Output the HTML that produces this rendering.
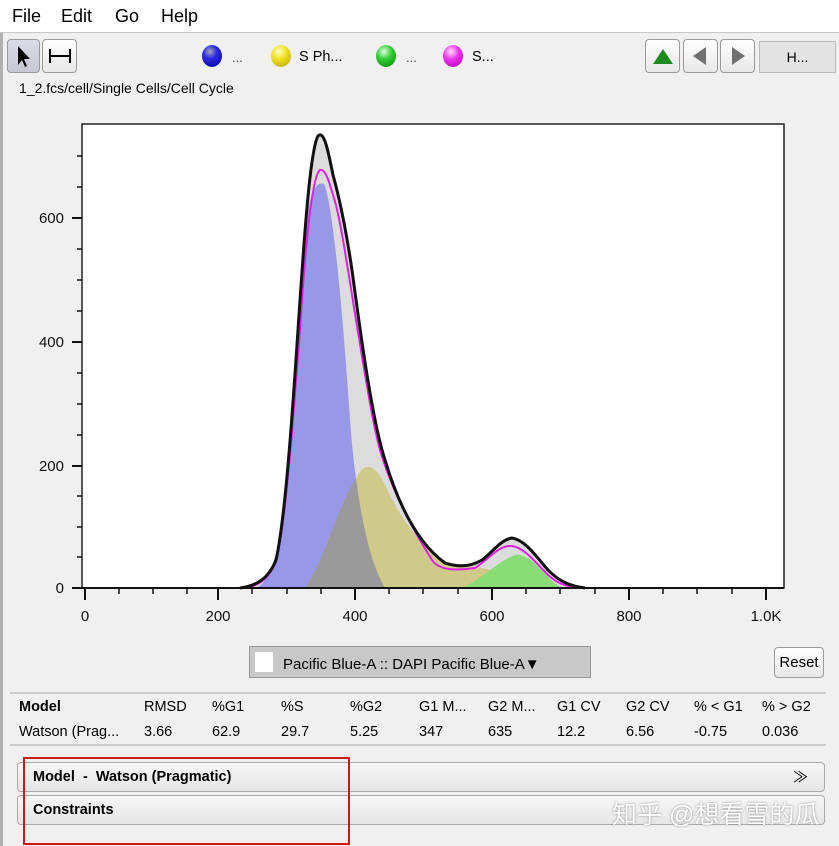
<!DOCTYPE html>
<html><head><meta charset="utf-8"><style>
*{margin:0;padding:0;box-sizing:border-box}
body{width:839px;height:846px;background:#f0f0f0;font-family:"Liberation Sans","Noto Sans CJK SC",sans-serif;position:relative;overflow:hidden;color:#000}
.abs{position:absolute}
.menu{left:0;top:0;width:839px;height:33px;background:#fff;border-bottom:1px solid #c8c8c8;font-size:18px}
.menu span{position:absolute;top:6px}
.btn{position:absolute;border:1px solid #9a9a9a;border-radius:4px;background:linear-gradient(#fff,#e8e8e8)}
.ball{position:absolute;width:20px;height:22px;border-radius:50%}
.t{font-size:14.5px;position:absolute}
.th{font-weight:bold}
</style></head><body>
<div class="abs" style="left:0;top:0;width:3px;height:846px;background:#b0b0b0"></div>
<div class="abs menu"><span style="left:12px">File</span><span style="left:61px">Edit</span><span style="left:115px">Go</span><span style="left:161px">Help</span></div>
<div class="btn" style="left:7px;top:39px;width:33px;height:34px;background:linear-gradient(#dcdce8,#c8c8d4)"></div>
<svg class="abs" style="left:14px;top:45px" width="20" height="24"><path d="M4 1 L4 20 L8 15 L11 22 L13 21 L10 14 L16 14 Z" fill="#000"/></svg>
<div class="btn" style="left:42px;top:39px;width:35px;height:34px"></div>
<svg class="abs" style="left:48px;top:47px" width="24" height="18"><path d="M2 2V16M22 2V16M2 9H22" stroke="#000" stroke-width="2" fill="none"/></svg>
<div class="ball" style="left:202px;top:45px;background:radial-gradient(circle at 40% 30%,#aab 0,#2a2ae0 35%,#0000a0 100%)"></div>
<span class="t" style="left:232px;top:50px;font-size:13px;color:#444">...</span>
<div class="ball" style="left:271px;top:45px;background:radial-gradient(circle at 40% 30%,#ffffc0 0,#f0e020 40%,#b0a000 100%)"></div>
<span class="t" style="left:299px;top:49px">S Ph...</span>
<div class="ball" style="left:376px;top:45px;background:radial-gradient(circle at 40% 30%,#dfd 0,#3c3 40%,#080 100%)"></div>
<span class="t" style="left:406px;top:50px;font-size:13px;color:#444">...</span>
<div class="ball" style="left:443px;top:45px;background:radial-gradient(circle at 40% 30%,#fdf 0,#e3e 40%,#a0a 100%)"></div>
<span class="t" style="left:472px;top:49px">S...</span>
<div class="btn" style="left:645px;top:39px;width:35px;height:34px"></div>
<svg class="abs" style="left:651px;top:46px" width="24" height="20"><path d="M2 18H22L12 3Z" fill="#1f8a1f"/></svg>
<div class="btn" style="left:683px;top:39px;width:35px;height:34px"></div>
<svg class="abs" style="left:690px;top:45px" width="20" height="22"><path d="M16 2V20L3 11Z" fill="#707070"/></svg>
<div class="btn" style="left:720px;top:39px;width:35px;height:34px"></div>
<svg class="abs" style="left:728px;top:45px" width="20" height="22"><path d="M4 2V20L17 11Z" fill="#707070"/></svg>
<div class="abs" style="left:759px;top:41px;width:77px;height:32px;background:#e4e4e4;border:1px solid #bbb;font-size:14px;text-align:center;line-height:30px">H...</div>
<span class="t" style="left:19px;top:80px;font-size:14px">1_2.fcs/cell/Single Cells/Cell Cycle</span>

<svg class="abs" style="left:0;top:0" width="839" height="640">
<defs><clipPath id="yc"><path d="M305 588 C325 560,340 500,357 477 C362 468,366 466,370 467 C378 470,383 480,390 495 C400 515,415 540,443 560 C460 567,478 566,490 570 C505 578,515 584,535 588 Z"/></clipPath></defs>
<rect x="82" y="124" width="702" height="464" fill="#fff" stroke="#222" stroke-width="1.5"/>
<path d="M240 588 C255 586,268 580,276 560 C285 520,292 420,298 330 C304 240,310 150,318 136 C324 130,328 150,333 175 C340 200,346 230,352 270 C360 330,372 420,385 460 C400 510,420 545,445 563 C460 568,472 566,482 560 C492 553,500 540,512 538 C525 540,535 555,548 570 C560 582,570 586,585 588 Z" fill="#dcdcdc"/>
<path d="M305 588 C325 560,340 500,357 477 C362 468,366 466,370 467 C378 470,383 480,390 495 C400 515,415 540,443 560 C460 567,478 566,490 570 C505 578,515 584,535 588 Z" fill="#cfca8a"/>
<path d="M462 588 C480 580,500 560,515 555 C525 553,535 563,545 574 C552 582,558 586,563 588 Z" fill="#88dd77"/>
<path d="M255 588 C265 586,272 570,280 540 C290 480,298 300,308 210 C313 186,318 182,324 184 C332 200,342 300,350 420 C356 500,368 560,385 588 Z" fill="#9898e6"/>
<path d="M255 588 C265 586,272 570,280 540 C290 480,298 300,308 210 C313 186,318 182,324 184 C332 200,342 300,350 420 C356 500,368 560,385 588 Z" fill="#9a9a9a" clip-path="url(#yc)"/>
<path d="M245 588 C258 586,268 580,276 562 C286 520,293 420,300 330 C305 250,312 175,320 170 C326 168,330 185,336 205 C342 230,348 270,356 320 C366 380,372 420,380 450 C392 490,410 525,432 560 C440 572,460 570,475 568 C488 560,498 545,512 546 C525 548,535 562,548 575 C558 584,568 587,580 588" fill="none" stroke="#e020e0" stroke-width="2"/>
<path d="M240 588 C255 586,268 580,276 560 C285 520,292 420,298 330 C304 240,310 150,318 136 C324 130,328 150,333 175 C340 200,346 230,352 270 C360 330,372 420,385 460 C400 510,420 545,445 563 C460 568,472 566,482 560 C492 553,500 540,512 538 C525 540,535 555,548 570 C560 582,570 586,585 588" fill="none" stroke="#111" stroke-width="3"/>
<line x1="82" y1="588" x2="784" y2="588" stroke="#111" stroke-width="2"/>
<g stroke="#111" stroke-width="2">
<line x1="72" y1="588" x2="82" y2="588"/><line x1="72" y1="466" x2="82" y2="466"/><line x1="72" y1="342" x2="82" y2="342"/><line x1="72" y1="218" x2="82" y2="218"/>
<line x1="85" y1="588" x2="85" y2="600"/><line x1="218" y1="588" x2="218" y2="600"/><line x1="355" y1="588" x2="355" y2="600"/><line x1="492" y1="588" x2="492" y2="600"/><line x1="629" y1="588" x2="629" y2="600"/><line x1="766" y1="588" x2="766" y2="600"/>
</g>
<g stroke="#111" stroke-width="1.5">
<line x1="77" y1="557" x2="82" y2="557"/><line x1="77" y1="527" x2="82" y2="527"/><line x1="77" y1="496" x2="82" y2="496"/><line x1="77" y1="435" x2="82" y2="435"/><line x1="77" y1="404" x2="82" y2="404"/><line x1="77" y1="373" x2="82" y2="373"/><line x1="77" y1="311" x2="82" y2="311"/><line x1="77" y1="280" x2="82" y2="280"/><line x1="77" y1="249" x2="82" y2="249"/><line x1="77" y1="187" x2="82" y2="187"/><line x1="77" y1="156" x2="82" y2="156"/>
<line x1="119" y1="588" x2="119" y2="594"/><line x1="153" y1="588" x2="153" y2="594"/><line x1="187" y1="588" x2="187" y2="594"/><line x1="252" y1="588" x2="252" y2="594"/><line x1="287" y1="588" x2="287" y2="594"/><line x1="321" y1="588" x2="321" y2="594"/><line x1="389" y1="588" x2="389" y2="594"/><line x1="423" y1="588" x2="423" y2="594"/><line x1="458" y1="588" x2="458" y2="594"/><line x1="526" y1="588" x2="526" y2="594"/><line x1="560" y1="588" x2="560" y2="594"/><line x1="595" y1="588" x2="595" y2="594"/><line x1="663" y1="588" x2="663" y2="594"/><line x1="697" y1="588" x2="697" y2="594"/><line x1="732" y1="588" x2="732" y2="594"/>
</g>
<g font-family="Liberation Sans" font-size="15" fill="#111" text-anchor="end">
<text x="64" y="593">0</text><text x="64" y="471">200</text><text x="64" y="347">400</text><text x="64" y="223">600</text>
</g>
<g font-family="Liberation Sans" font-size="15" fill="#111" text-anchor="middle">
<text x="85" y="621">0</text><text x="218" y="621">200</text><text x="355" y="621">400</text><text x="492" y="621">600</text><text x="629" y="621">800</text><text x="766" y="621">1.0K</text>
</g>
</svg>

<div class="abs" style="left:249px;top:646px;width:342px;height:32px;background:#c8c8c8;border:1px solid #999"></div>
<div class="abs" style="left:255px;top:652px;width:18px;height:20px;background:#fff"></div>
<span class="t" style="left:283px;top:656px;font-size:15px">Pacific Blue-A :: DAPI Pacific Blue-A▼</span>
<div class="btn" style="left:774px;top:647px;width:50px;height:31px;font-size:15px;text-align:center;line-height:29px">Reset</div>
<div class="abs" style="left:10px;top:692px;width:816px;height:2px;background:#ccc"></div>
<div class="abs" style="left:10px;top:744px;width:816px;height:2px;background:#ccc"></div>
<span class="t th" style="left:19px;top:699px">Model</span><span class="t" style="left:144px;top:699px">RMSD</span><span class="t" style="left:212px;top:699px">%G1</span><span class="t" style="left:281px;top:699px">%S</span><span class="t" style="left:350px;top:699px">%G2</span><span class="t" style="left:419px;top:699px">G1 M...</span><span class="t" style="left:488px;top:699px">G2 M...</span><span class="t" style="left:557px;top:699px">G1 CV</span><span class="t" style="left:626px;top:699px">G2 CV</span><span class="t" style="left:694px;top:699px">% &lt; G1</span><span class="t" style="left:762px;top:699px">% &gt; G2</span>
<span class="t" style="left:19px;top:724px">Watson (Prag...</span><span class="t" style="left:144px;top:724px">3.66</span><span class="t" style="left:212px;top:724px">62.9</span><span class="t" style="left:281px;top:724px">29.7</span><span class="t" style="left:350px;top:724px">5.25</span><span class="t" style="left:419px;top:724px">347</span><span class="t" style="left:488px;top:724px">635</span><span class="t" style="left:557px;top:724px">12.2</span><span class="t" style="left:626px;top:724px">6.56</span><span class="t" style="left:694px;top:724px">-0.75</span><span class="t" style="left:762px;top:724px">0.036</span>
<div class="abs" style="left:17px;top:762px;width:808px;height:30px;border:1px solid #aaa;border-radius:4px;background:linear-gradient(#f6f6f6,#e6e6e6)"></div>
<span class="t th" style="left:33px;top:769px">Model&nbsp; - &nbsp;Watson (Pragmatic)</span>
<span class="t" style="left:793px;top:766px;font-size:15px">&#8811;</span>
<div class="abs" style="left:17px;top:795px;width:808px;height:30px;border:1px solid #aaa;border-radius:4px;background:linear-gradient(#f6f6f6,#e6e6e6)"></div>
<span class="t th" style="left:33px;top:802px">Constraints</span>
<div class="abs" style="left:23px;top:757px;width:327px;height:88px;border:2px solid #d01818"></div>
<span class="abs" style="left:612px;top:795px;font-size:25px;color:#fff;text-shadow:0 0 2px #888">知乎 @想看雪的瓜</span>
</body></html>
